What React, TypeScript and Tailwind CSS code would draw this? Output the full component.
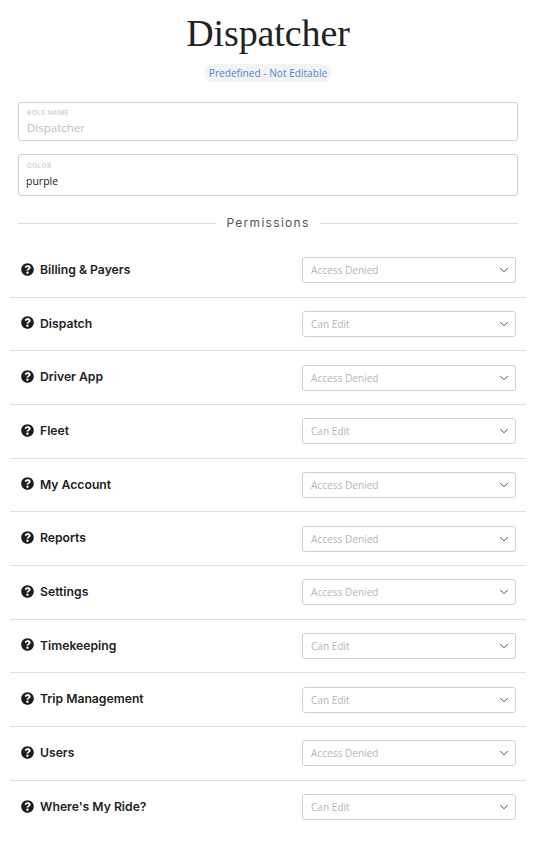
import { ChevronDown } from 'lucide-react';

const permissions = [
  { name: 'Billing & Payers', value: 'Access Denied' },
  { name: 'Dispatch', value: 'Can Edit' },
  { name: 'Driver App', value: 'Access Denied' },
  { name: 'Fleet', value: 'Can Edit' },
  { name: 'My Account', value: 'Access Denied' },
  { name: 'Reports', value: 'Access Denied' },
  { name: 'Settings', value: 'Access Denied' },
  { name: 'Timekeeping', value: 'Can Edit' },
  { name: 'Trip Management', value: 'Can Edit' },
  { name: 'Users', value: 'Access Denied' },
  { name: "Where's My Ride?", value: 'Can Edit' },
];

const HelpIcon = () => (
  <svg viewBox="0 0 512 512" className="w-[13px] h-[13px] shrink-0 fill-[#1d1d1f] -mt-[2px]">
    <path d="M504 256c0 137-111 248-248 248S8 393 8 256 119 8 256 8s248 111 248 248zM262.7 90c-54.500 0-89.300 23-116.500 63.800-3.500 5.300-2.400 12.400 2.700 16.300l34.700 26.300c5.200 3.900 12.600 3 16.700-2.100 17.900-22.700 30.100-35.800 57.300-35.800 20.400 0 45.700 13.100 45.700 33 0 15-12.400 22.700-32.600 34-23.600 13.200-54.800 29.700-54.800 70.900V282c0 6.600 5.400 12 12 12h56c6.600 0 12-5.400 12-12v-1.300c0-28.600 83.500-29.800 83.500-107.200C379.400 115.200 318.900 90 262.700 90zM256 339c-25.500 0-46.200 20.700-46.200 46.200 0 25.500 20.700 46.200 46.200 46.200s46.200-20.700 46.200-46.200c0-25.500-20.700-46.200-46.200-46.200z" />
  </svg>
);

export default function App() {
  return (
    <div className="w-[533px] h-[843px] bg-white overflow-hidden font-['Inter',sans-serif]">
      <div className="w-[536px]">
        <div className="flex flex-col items-center pt-[11px]">
          <h1 className="font-['Liberation_Serif',serif] text-[38px] leading-[44px] text-[#222222] tracking-[-0.1px]">Dispatcher</h1>
          <span className="mt-[9px] h-[18px] px-[5px] rounded-full bg-[#f3f3f4] text-[#4a86d8] text-[10.15px] leading-[18px] font-['Open_Sans',sans-serif]">
            Predefined - Not Editable
          </span>
        </div>

        <div className="mx-[18px] mt-[20px] h-[39px] border border-[#cfcfcf] rounded-[3px] px-[8px] pt-[6px]">
          <div className="text-[6.5px] leading-[8px] font-bold tracking-[0.4px] text-[#d4d4d4]">ROLE NAME</div>
          <div className="text-[11.5px] leading-[16px] mt-[3px] text-[#bdbdbd] font-['Open_Sans',sans-serif]">Dispatcher</div>
        </div>
        <div className="mx-[18px] mt-[13px] h-[42px] border border-[#cfcfcf] rounded-[3px] pl-[7px] pr-[8px] pt-[7px]">
          <div className="pl-[1px] text-[6.5px] leading-[8px] font-bold tracking-[0.4px] text-[#d4d4d4]">COLOR</div>
          <div className="text-[10.5px] leading-[16px] mt-[3px] text-[#222222] font-['Open_Sans',sans-serif]">purple</div>
        </div>

        <div className="mx-[18px] mt-[20px] flex items-center gap-[10px]">
          <div className="flex-1 h-px bg-[#dcdcdc]" />
          <span className="text-[12px] leading-[14px] tracking-[1.3px] text-[#555555]">Permissions</span>
          <div className="flex-1 h-px bg-[#dcdcdc]" />
        </div>

        <div className="mx-[10px] mt-[14px]">
          {permissions.map((p, i) => (
            <div
              key={p.name}
              className={`h-[53.67px] flex items-center justify-between pl-[10.5px] pr-[10px] ${i < permissions.length - 1 ? 'border-b border-[#dedede]' : ''}`}
            >
              <div className="flex items-center gap-[6.5px]">
                <HelpIcon />
                <span className="text-[12.2px] font-semibold text-[#222222]">{p.name}</span>
              </div>
              <div className="w-[214px] h-[26px] border border-[#cfcfcf] rounded-[3px] flex items-center justify-between pl-[8px] pr-[4.5px]">
                <span className="mt-[1px] text-[10.1px] font-['Open_Sans',sans-serif] text-[#b5b5b5]">{p.value}</span>
                <ChevronDown className="w-[14px] h-[14px] text-[#333333]" strokeWidth={1.5} />
              </div>
            </div>
          ))}
        </div>
      </div>
    </div>
  );
}
